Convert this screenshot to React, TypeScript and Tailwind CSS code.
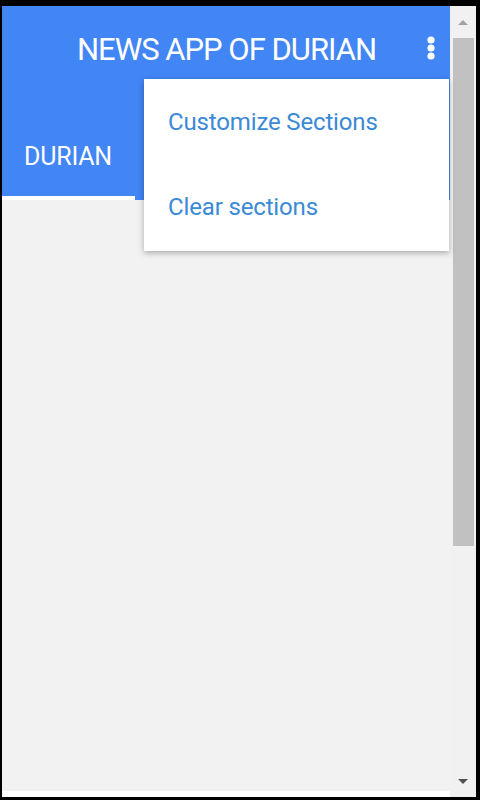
import React from "react";

function MoreDots() {
  return (
    <svg width="12" height="30" viewBox="0 0 12 30" className="block">
      <circle cx="6" cy="5" r="3.6" fill="#fff" />
      <circle cx="6" cy="13" r="3.6" fill="#fff" />
      <circle cx="6" cy="21" r="3.6" fill="#fff" />
    </svg>
  );
}

function Scrollbar() {
  return (
    <div className="flex w-[26px] flex-col items-center bg-[#f1f1f1]">
      <div className="flex h-[32px] w-full items-center justify-center">
        <div className="h-0 w-0 border-x-[5px] border-b-[5px] border-x-transparent border-b-[#a3a3a3]" />
      </div>
      <div className="h-[508px] w-[21px] bg-[#c1c1c1]" />
      <div className="flex-1" />
      <div className="flex h-[32px] w-full items-center justify-center">
        <div className="h-0 w-0 border-x-[5px] border-t-[5px] border-x-transparent border-t-[#505050]" />
      </div>
    </div>
  );
}

export default function App() {
  return (
    <div
      className="h-[800px] w-[480px] overflow-hidden bg-black pl-[2px] pr-[4px] pt-[6px] pb-[3px]"
      style={{ fontFamily: "Roboto, 'Liberation Sans', sans-serif" }}
    >
      <div className="flex h-full bg-[#f2f2f2]">
        <div className="relative flex flex-1 flex-col">
          <header className="flex h-[194px] flex-col bg-[#4285f4]">
            <div className="flex h-[84px] items-center">
              <div className="flex-1 pl-[75px] pt-[2px] text-[31px] leading-none tracking-[-1px] text-white">
                NEWS APP OF DURIAN
              </div>
              <div className="pr-[13px] pt-[3px]">
                <MoreDots />
              </div>
            </div>
            <div className="flex flex-1 items-end">
              <div className="flex w-[133px] flex-col">
                <div className="pb-[27px] pl-[22px] text-[25px] leading-none tracking-[-0.2px] text-white">DURIAN</div>
                <div className="h-[4px] bg-white" />
              </div>
            </div>
          </header>
          <div className="flex-1" />
          <div className="h-[6px] bg-white" />

          <div className="absolute left-[142px] top-[73px] w-[305px] bg-white py-[1px] shadow-[0_2px_6px_rgba(0,0,0,0.3)]">
            <div className="flex h-[84px] items-center pl-[24px] text-[24px] tracking-[-0.15px] text-[#3b8ad6]">
              Customize Sections
            </div>
            <div className="flex h-[86px] items-center pl-[24px] text-[24px] tracking-[-0.15px] text-[#3b8ad6]">
              Clear sections
            </div>
          </div>
        </div>
        <Scrollbar />
      </div>
    </div>
  );
}
